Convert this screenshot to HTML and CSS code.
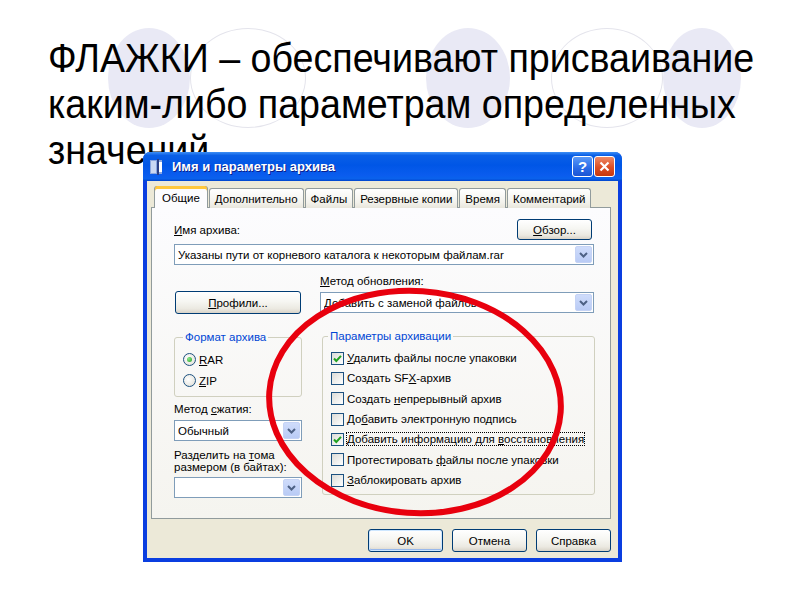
FILE: index.html
```html
<!DOCTYPE html>
<html lang="ru">
<head>
<meta charset="utf-8">
<title>Флажки</title>
<link rel="stylesheet" href="styles.css">
</head>
<body>
<div class="slide">
  <div class="deco deco-fill d1"></div>
  <div class="deco deco-ring d2"></div>
  <div class="deco deco-fill d3"></div>
  <div class="deco deco-ring d4"></div>
  <div class="deco deco-fill d5"></div>

  <h1 class="title">ФЛАЖКИ – обеспечивают присваивание<br>каким-либо параметрам определенных<br>значений</h1>

  <div class="dialog">
    <div class="titlebar">
      <svg class="tb-icon" width="12" height="16" viewBox="0 0 12 16">
        <rect x="0" y="1" width="12" height="14" fill="#8aa6e0"/>
        <rect x="1" y="2" width="5" height="12" fill="#c9d7f3"/>
        <rect x="7" y="0" width="2" height="16" fill="#2a3f86"/>
        <rect x="9" y="3" width="3" height="10" fill="#ffffff"/>
      </svg>
      <span class="caption">Имя и параметры архива</span>
      <span class="tb-btn tb-help">?</span>
      <span class="tb-btn tb-close">
        <svg width="11" height="11" viewBox="0 0 11 11"><path d="M1.5 1.5 L9.5 9.5 M9.5 1.5 L1.5 9.5" stroke="#fff" stroke-width="2.2"/></svg>
      </span>
    </div>

    <div class="body">
      <div class="tabs">
        <span class="tab active">Общие</span>
        <span class="tab">Дополнительно</span>
        <span class="tab">Файлы</span>
        <span class="tab">Резервные копии</span>
        <span class="tab">Время</span>
        <span class="tab">Комментарий</span>
      </div>

      <div class="panel">
        <div class="name-row">
          <span class="lbl"><u>И</u>мя архива:</span>
          <span class="btn btn-browse"><u>О</u>бзор...</span>
        </div>
        <div class="combo combo-name">
          <span class="txt">Указаны пути от корневого каталога к некоторым файлам.rar</span>
          <span class="arrow"><svg width="9" height="6" viewBox="0 0 9 6"><path d="M1 1 L4.5 4.5 L8 1" fill="none" stroke="#4d6185" stroke-width="2"/></svg></span>
        </div>

        <div class="cols">
          <div class="col-left">
            <span class="btn btn-prof"><u>П</u>рофили...</span>

            <fieldset class="group group-format">
              <legend>Формат архива</legend>
              <div class="radio-row"><span class="radio on"></span><span><u>R</u>AR</span></div>
              <div class="radio-row"><span class="radio"></span><span><u>Z</u>IP</span></div>
            </fieldset>

            <span class="lbl lbl-method">Метод <u>с</u>жатия:</span>
            <div class="combo combo-small">
              <span class="txt">Обычный</span>
              <span class="arrow"><svg width="9" height="6" viewBox="0 0 9 6"><path d="M1 1 L4.5 4.5 L8 1" fill="none" stroke="#4d6185" stroke-width="2"/></svg></span>
            </div>

            <span class="lbl lbl-split">Разделить на <u>т</u>ома<br>размером (в байтах):</span>
            <div class="combo combo-small combo-split">
              <span class="txt"></span>
              <span class="arrow"><svg width="9" height="6" viewBox="0 0 9 6"><path d="M1 1 L4.5 4.5 L8 1" fill="none" stroke="#4d6185" stroke-width="2"/></svg></span>
            </div>
          </div>

          <div class="col-right">
            <span class="lbl lbl-update"><u>М</u>етод обновления:</span>
            <div class="combo combo-update">
              <span class="txt">Добавить с заменой файлов</span>
              <span class="arrow"><svg width="9" height="6" viewBox="0 0 9 6"><path d="M1 1 L4.5 4.5 L8 1" fill="none" stroke="#4d6185" stroke-width="2"/></svg></span>
            </div>

            <fieldset class="group group-params">
              <legend>Параметры архивации</legend>
              <div class="check-row"><span class="check on"><svg width="11" height="11" viewBox="0 0 11 11"><path d="M2 5.5 L4.3 8 L9 2.8" fill="none" stroke="#21a121" stroke-width="2"/></svg></span><span><u>У</u>далить файлы после упаковки</span></div>
              <div class="check-row"><span class="check"></span><span>Создать SF<u>X</u>-архив</span></div>
              <div class="check-row"><span class="check"></span><span>Создать <u>н</u>епрерывный архив</span></div>
              <div class="check-row"><span class="check"></span><span>До<u>б</u>авить электронную подпись</span></div>
              <div class="check-row"><span class="check on"><svg width="11" height="11" viewBox="0 0 11 11"><path d="M2 5.5 L4.3 8 L9 2.8" fill="none" stroke="#21a121" stroke-width="2"/></svg></span><span class="focus">Добавить информацию для <u>в</u>осстановления</span></div>
              <div class="check-row"><span class="check"></span><span>Протестировать <u>ф</u>айлы после упаковки</span></div>
              <div class="check-row"><span class="check"></span><span><u>З</u>аблокировать архив</span></div>
            </fieldset>
          </div>
        </div>
      </div>

      <div class="buttons">
        <span class="btn btn-main btn-default">OK</span>
        <span class="btn btn-main">Отмена</span>
        <span class="btn btn-main">Справка</span>
      </div>
    </div>
  </div>

  <svg class="mark" width="310" height="240" viewBox="0 0 310 240">
    <ellipse cx="153" cy="118" rx="146" ry="111" fill="none" stroke="#e8000e" stroke-width="6" transform="rotate(4 153 118)"/>
  </svg>
</div>
</body>
</html>
```

FILE: styles.css
```css
* { box-sizing: border-box; }

html, body {
  margin: 0;
  padding: 0;
}

body {
  width: 800px;
  height: 600px;
  background: #ffffff;
  font-family: "Liberation Sans", Arial, sans-serif;
  overflow: hidden;
}

.slide {
  position: relative;
  width: 800px;
  height: 600px;
  overflow: hidden;
}

/* decorative background circles of the slide template */
.deco {
  position: absolute;
  border-radius: 50%;
}
.deco-fill { background: #e9e9f5; }
.deco-ring { border: 1px solid #e4e4ec; }
.d1 { left: 108px; top: 28px; width: 82px; height: 100px; }
.d2 { left: 190px; top: 28px; width: 116px; height: 100px; }
.d3 { left: 426px; top: 28px; width: 84px; height: 100px; }
.d4 { left: 551px; top: 28px; width: 112px; height: 100px; }
.d5 { left: 663px; top: 28px; width: 78px; height: 100px; }

.title {
  position: relative;
  margin: 0;
  padding: 35px 0 0 48px;
  height: 152px;
  font-family: "Liberation Sans", Arial, sans-serif;
  font-weight: normal;
  font-size: 40px;
  line-height: 46px;
  color: #000;
  white-space: nowrap;
  transform: scaleX(0.94);
  transform-origin: 48px 0;
}

/* ---------- XP dialog ---------- */
.dialog {
  position: relative;
  z-index: 1;
  margin-left: 143px;
  width: 479px;
  height: 410px;
  display: flex;
  flex-direction: column;
  background: #0a3ee0;
  border-radius: 7px 7px 0 0;
  font-family: "Liberation Sans", Arial, sans-serif;
  font-size: 11.5px;
  color: #000;
}

.titlebar {
  flex: none;
  height: 29px;
  display: flex;
  align-items: center;
  padding: 0 7px 0 7px;
  border-radius: 7px 7px 0 0;
  background: linear-gradient(#3d8ff5 0%, #0a5fe6 12%, #0056e6 45%, #0a5cee 80%, #0a62ec 92%, #0044cc 100%);
  color: #fff;
}

.tb-icon { flex: none; }

.caption {
  flex: 1;
  margin-left: 10px;
  font-weight: bold;
  font-size: 13px;
  text-shadow: 1px 1px 0 #0a1e8a;
}

.tb-btn {
  width: 21px;
  height: 21px;
  border: 1px solid #fff;
  border-radius: 3px;
  display: flex;
  align-items: center;
  justify-content: center;
  color: #fff;
  font-weight: bold;
  font-size: 15px;
}
.tb-help {
  margin-right: 1px;
  background: linear-gradient(#5a9af8, #2a6ae6 60%, #1c55d4);
}
.tb-close {
  background: linear-gradient(#ee8a66, #dc4e25 55%, #c5380e);
}

.body {
  flex: 1;
  margin: 0 4px 4px 4px;
  background: #ece9d8;
  padding: 5px 7px 0 4px;
  display: flex;
  flex-direction: column;
}

.tabs {
  display: flex;
  align-items: flex-end;
  height: 22px;
  padding-left: 3px;
  position: relative;
  z-index: 1;
  margin-bottom: -1px;
}

.tab {
  height: 20px;
  padding: 0 5px;
  margin-right: 1px;
  border: 1px solid #919b9c;
  border-bottom: none;
  border-radius: 3px 3px 0 0;
  background: linear-gradient(#ffffff, #f3f2ec 70%, #e8e6dc);
  display: flex;
  align-items: center;
  white-space: nowrap;
}

.tab.active {
  height: 22px;
  padding: 0 7px;
  border-top: none;
  background: #fcfcfe;
  box-shadow: inset 0 3px 0 #ffc83c, inset 0 1px 0 #e68b2c;
  padding-top: 2px;
}

.panel {
  height: 312px;
  border: 1px solid #919b9c;
  background: linear-gradient(#fcfcfe, #f5f4ef);
  padding: 11px 16px 0 22px;
  display: flex;
  flex-direction: column;
}

.lbl { line-height: 13px; }

.name-row {
  display: flex;
  justify-content: space-between;
  align-items: flex-end;
}
.name-row .lbl { margin-bottom: 3px; }

.btn {
  height: 21px;
  border: 1px solid #003c74;
  border-radius: 3px;
  background: linear-gradient(#ffffff 0%, #f6f6f2 45%, #ebe9e1 80%, #d8d3c8 100%);
  display: flex;
  align-items: center;
  justify-content: center;
  white-space: nowrap;
}

.btn-browse { width: 75px; margin-right: 2px; }

.combo {
  height: 21px;
  border: 1px solid #7f9db9;
  background: #fff;
  display: flex;
  align-items: center;
  padding: 0 1px 0 3px;
}
.combo .txt {
  flex: 1;
  white-space: nowrap;
  overflow: hidden;
}
.combo .arrow {
  flex: none;
  width: 17px;
  height: 17px;
  border-radius: 2px;
  background: linear-gradient(#cfdcfb, #b9cbf5);
  border: 1px solid #c5d3f5;
  display: flex;
  align-items: center;
  justify-content: center;
}

.combo-name { margin-top: 4px; }

.cols {
  display: grid;
  grid-template-columns: 128px 1fr;
  column-gap: 18px;
}

.col-left,
.col-right {
  display: flex;
  flex-direction: column;
}

.btn-prof {
  margin-top: 26px;
  margin-left: 1px;
  width: 126px;
  height: 23px;
}

.group {
  margin: 0;
  border: 1px solid #d0d0bf;
  border-radius: 3px;
  min-width: 0;
}
.group legend {
  padding: 0 2px;
  color: #0046d5;
  line-height: 13px;
}

.group-format {
  margin-top: 17px;
  padding: 5px 8px 5px 8px;
}

.radio-row {
  height: 21px;
  display: flex;
  align-items: center;
  gap: 3px;
}

.radio {
  width: 13px;
  height: 13px;
  border-radius: 50%;
  border: 1px solid #1c5180;
  background: radial-gradient(circle at 40% 40%, #ffffff, #e4e3dc 80%);
  display: flex;
  align-items: center;
  justify-content: center;
}
.radio.on::after {
  content: "";
  width: 5px;
  height: 5px;
  border-radius: 50%;
  background: radial-gradient(circle at 35% 35%, #8ae88a, #21a121);
}

.lbl-method { margin-top: 6px; }
.combo-small { margin-top: 4px; }
.lbl-split { margin-top: 8px; line-height: 12px; }

.lbl-update { margin-top: 10px; }
.combo-update { margin-top: 4px; }

.group-params {
  margin-top: 17px;
  margin-left: 2px;
  margin-right: -1px;
  padding: 5px 5px 4px 5px;
}

.check-row {
  height: 20.33px;
  display: flex;
  align-items: center;
  gap: 3px;
  padding-left: 3px;
  white-space: nowrap;
}

.check {
  flex: none;
  width: 13px;
  height: 13px;
  border: 1px solid #1c5180;
  background: linear-gradient(135deg, #dcdcd7, #ffffff);
  display: flex;
  align-items: center;
  justify-content: center;
}

.focus {
  outline: 1px dotted #000;
  outline-offset: 0;
}

.buttons {
  display: flex;
  justify-content: flex-end;
  gap: 9px;
  margin-top: 10px;
}

.btn-main {
  width: 75px;
  height: 23px;
}
.btn-default {
  box-shadow: inset 0 0 0 1px #cee7ff, inset 0 -1px 0 1px #98b8ea;
}

/* hand-drawn red highlight over the dialog */
.mark {
  position: absolute;
  left: 262px;
  top: 284px;
  z-index: 2;
  pointer-events: none;
}
```
